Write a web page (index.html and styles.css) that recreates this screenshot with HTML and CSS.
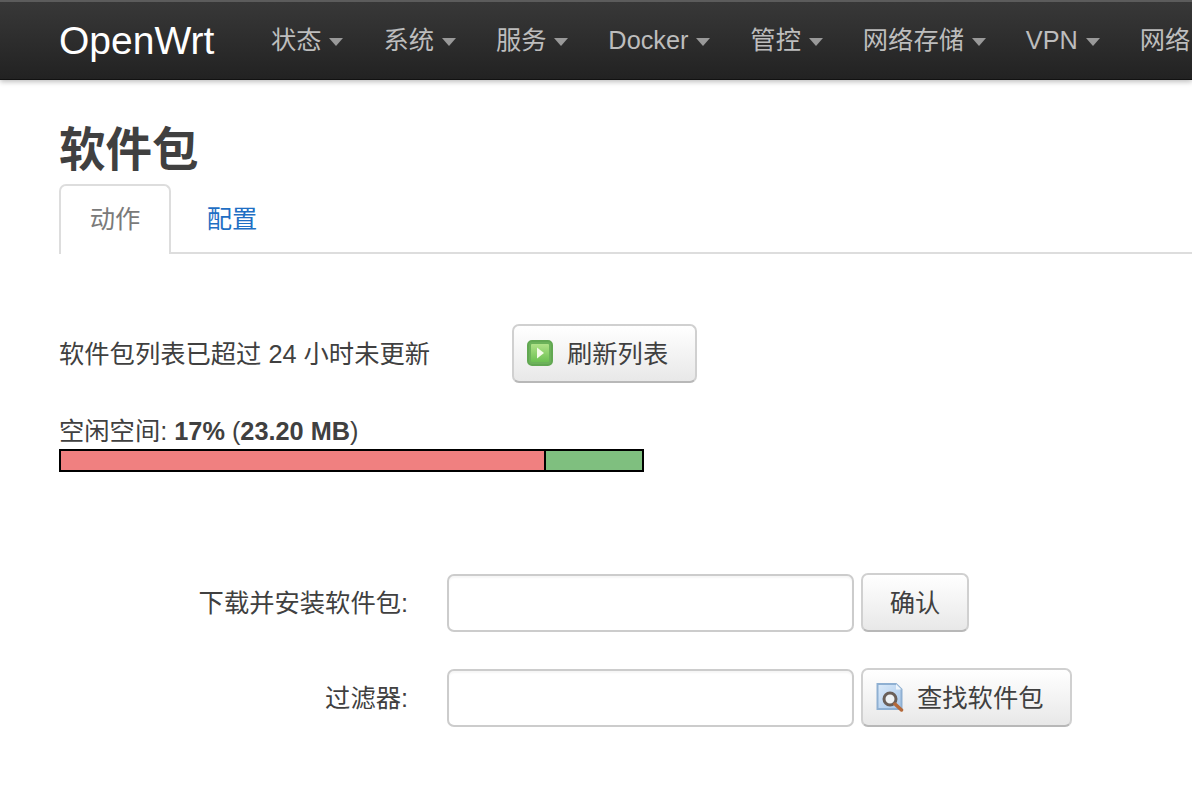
FILE: index.html
```html
<!DOCTYPE html>
<html lang="zh-CN">
<head>
<meta charset="utf-8">
<title>软件包 - OpenWrt</title>
<link rel="stylesheet" href="styles.css">
</head>
<body>
<header class="navbar">
  <a class="brand">OpenWrt</a>
  <nav class="menu">
    <a class="menu-item">状态<i class="caret"></i></a>
    <a class="menu-item">系统<i class="caret"></i></a>
    <a class="menu-item">服务<i class="caret"></i></a>
    <a class="menu-item">Docker<i class="caret"></i></a>
    <a class="menu-item">管控<i class="caret"></i></a>
    <a class="menu-item">网络存储<i class="caret"></i></a>
    <a class="menu-item">VPN<i class="caret"></i></a>
    <a class="menu-item">网络<i class="caret"></i></a>
  </nav>
</header>
<main class="content">
  <h1 class="title">软件包</h1>
  <ul class="tabs">
    <li class="tab active">动作</li>
    <li class="tab">配置</li>
  </ul>
  <div class="status-row">
    <span class="status-text">软件包列表已超过 24 小时未更新</span>
    <button class="btn btn-refresh">
      <svg class="icon" viewBox="0 0 26 26" aria-hidden="true">
        <defs><linearGradient id="g" x1="0" y1="0" x2="0" y2="1"><stop offset="0" stop-color="#b0e288"/><stop offset="1" stop-color="#6cc052"/></linearGradient></defs>
        <rect x="1" y="1" width="24" height="24" rx="4" fill="#6cb25a" stroke="#62a852" stroke-width="2"/>
        <rect x="4" y="4" width="18" height="18" rx="1" fill="url(#g)"/>
        <path d="M10 7.500 L17 13 L10 18.500 Z" fill="#f4fbe9"/>
      </svg>
      <span>刷新列表</span>
    </button>
  </div>
  <div class="space-label">空闲空间: <b>17%</b> (<b>23.20 MB</b>)</div>
  <div class="space-bar"><div class="used"></div><div class="free"></div></div>
  <form class="pkg-form">
    <label class="form-label">下载并安装软件包:</label>
    <input class="form-input" type="text">
    <button class="btn btn-confirm" type="button"><span>确认</span></button>
    <label class="form-label">过滤器:</label>
    <input class="form-input" type="text">
    <button class="btn btn-find" type="button">
      <svg class="icon-find" viewBox="0 0 30 30" aria-hidden="true">
        <defs><linearGradient id="d" x1="0" y1="0" x2="1" y2="1"><stop offset="0" stop-color="#dcebfa"/><stop offset="1" stop-color="#a6c7ea"/></linearGradient></defs>
        <path d="M1.500 2 H20 L25.500 7.500 V27 H1.500 Z" fill="url(#d)" stroke="#8fb0d2" stroke-width="2"/>
        <path d="M20 2 V7.500 H25.500 Z" fill="#eef5fc"/>
        <circle cx="14" cy="17" r="6" fill="#eef2f4" stroke="#6a5f58" stroke-width="3"/>
        <path d="M19 22 L25.500 28" stroke="#b4693a" stroke-width="3.500" stroke-linecap="round"/>
      </svg>
      <span>查找软件包</span>
    </button>
  </form>
</main>
</body>
</html>
```
FILE: styles.css
```css
* { box-sizing: border-box; }
html, body { margin: 0; height: 800px; overflow: hidden; background: #fff; }
body {
  font-family: "Liberation Sans", "Noto Sans CJK SC", sans-serif;
  font-size: 25.300px;
  color: #404040;
}
.navbar {
  display: flex;
  align-items: center;
  height: 80px;
  padding: 0 0 0 59px;
  background: linear-gradient(#383838, #222);
  border-top: 2px solid #5c5c5c;
  border-bottom: 1px solid #111;
  box-shadow: 0 2px 5px rgba(0,0,0,.25);
  overflow: hidden;
}
.brand {
  width: 212px;
  flex: none;
  color: #fff;
  font-size: 39px;
  line-height: 1;
}
.menu { display: flex; white-space: nowrap; }
.menu-item {
  display: flex;
  align-items: center;
  margin-right: 40px;
  color: #bdbdbd;
  line-height: 1.400;
}
.caret {
  width: 0;
  height: 0;
  margin-left: 7.850px;
  margin-top: 2px;
  border-left: 7.500px solid transparent;
  border-right: 7.500px solid transparent;
  border-top: 8px solid #999;
}
.content { padding: 0 0 0 59px; }
.title {
  margin: 0;
  padding-top: 38px;
  padding-bottom: 2px;
  font-size: 46.500px;
  font-weight: 700;
  line-height: 64px;
  color: #404040;
}
.tabs {
  display: flex;
  margin: 0;
  padding: 0;
  list-style: none;
  border-bottom: 2px solid #ddd;
  height: 70px;
}
.tab {
  width: 112px;
  height: 70px;
  padding-top: 16px;
  text-align: center;
  line-height: 38px;
  color: #1f6fc4;
}
.tab.active {
  color: #7a7a7a;
  background: #fff;
  border: 2px solid #ddd;
  border-bottom: 0;
  border-radius: 7px 7px 0 0;
  padding-top: 14px;
}
.tab + .tab { width: 122px; }
.status-row {
  display: flex;
  align-items: center;
  margin-top: 70px;
  height: 59px;
}
.status-text { width: 453px; flex: none; padding-bottom: 4px; }
.btn {
  display: inline-flex;
  align-items: center;
  height: 59px;
  padding: 0;
  font: inherit;
  color: #404040;
  background: linear-gradient(#fff, #e8e8e8);
  border: 2px solid #d0d0d0;
  border-bottom-color: #b8b8b8;
  border-radius: 7px;
  box-shadow: inset 0 1px 0 rgba(255,255,255,.4);
}
.btn span { padding-bottom: 4px; }
.btn-refresh { width: 185px; padding-left: 13px; gap: 14px; }
.icon { width: 26px; height: 26px; flex: none; margin-bottom: 2px; }
.space-label { margin-top: 30px; line-height: 36px; }
.space-label b { font-weight: 700; }
.space-bar {
  display: flex;
  width: 585px;
  height: 23px;
  border: 2px solid #000;
}
.used { width: 485px; background: #f08080; border-right: 2px solid #000; }
.free { flex: 1; background: #7fbf7f; }
.pkg-form {
  display: grid;
  grid-template-columns: 349px 446px auto;
  justify-content: start;
  align-items: end;
  row-gap: 36px;
  margin-top: 101px;
}
.form-label { text-align: right; align-self: center; padding-bottom: 4px; }
.form-input {
  height: 58px;
  width: 407px;
  margin-left: 39px;
  border: 2px solid #ccc;
  border-radius: 7px;
  background: #fff;
  box-shadow: inset 0 2px 2px rgba(0,0,0,.04);
}
.btn-confirm { width: 108px; margin-left: 7px; justify-content: center; }
.btn-find { width: 211px; margin-left: 7px; padding-left: 13px; gap: 11px; }
.icon-find { width: 30px; height: 30px; flex: none; margin-bottom: 2px; }
```
